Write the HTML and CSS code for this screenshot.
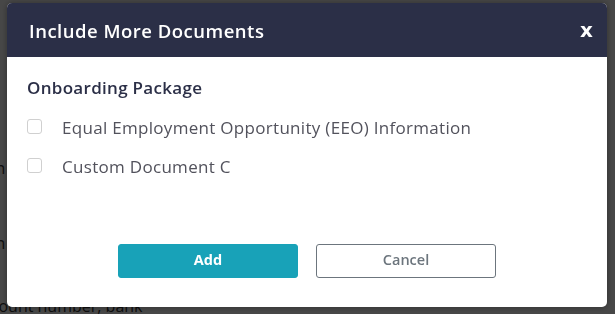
FILE: index.html
```html
<!DOCTYPE html>
<html lang="en">
<head>
<meta charset="utf-8">
<title>Include More Documents</title>
<link rel="stylesheet" href="styles.css">
</head>
<body>
<div class="page">
  <p class="page-line line-a">Plan</p>
  <p class="page-line line-b">Plan</p>
  <p class="page-line line-c">Account number, bank</p>
</div>
<div class="overlay">
  <div class="dialog" role="dialog" aria-labelledby="dlg-title">
    <div class="dialog-header">
      <h2 class="dialog-title" id="dlg-title">Include More Documents</h2>
      <button class="close-btn" type="button">x</button>
    </div>
    <div class="dialog-body">
      <h3 class="group-title">Onboarding Package</h3>
      <label class="check-row"><span class="check-box"></span><span class="check-label">Equal Employment Opportunity (EEO) Information</span></label>
      <label class="check-row"><span class="check-box"></span><span class="check-label">Custom Document C</span></label>
    </div>
    <div class="dialog-footer">
      <button class="btn btn-primary" type="button">Add</button>
      <button class="btn btn-outline" type="button">Cancel</button>
    </div>
  </div>
</div>
</body>
</html>
```
FILE: styles.css
```css
html, body {
  margin: 0;
  padding: 0;
  width: 615px;
  height: 314px;
  overflow: hidden;
  background: #ffffff;
  font-family: "Open Sans", "Liberation Sans", sans-serif;
}

.page {
  margin-left: -27px;
  padding-top: 150px;
  color: #333333;
  font-size: 16px;
}

.page-line {
  margin: 0;
  line-height: 20px;
}

.line-a { margin-top: 8px; }
.line-b { margin-top: 55px; }
.line-c { margin-top: 43px; }

.overlay {
  position: fixed;
  inset: 0;
  background: rgba(0, 0, 0, 0.72);
}

.dialog {
  position: absolute;
  left: 7px;
  top: 3px;
  width: 600px;
  height: 304px;
  background: #ffffff;
  border-radius: 5px;
  overflow: hidden;
  display: flex;
  flex-direction: column;
  box-shadow: 0 0 6px rgba(0, 0, 0, 0.35);
}

.dialog-header {
  height: 54px;
  flex: none;
  background: #2b2f47;
  display: flex;
  align-items: center;
  justify-content: space-between;
  padding: 0 14px 0 22px;
}

.dialog-title {
  margin: 0;
  color: #ffffff;
  font-size: 18.5px;
  font-weight: 600;
  letter-spacing: 0.5px;
}

.close-btn {
  background: none;
  border: 0;
  padding: 0;
  color: #ffffff;
  font-family: "DejaVu Sans", sans-serif;
  font-size: 20px;
  font-weight: 700;
  line-height: 20px;
}

.dialog-body {
  flex: 1;
  padding: 19px 20px 0 20px;
}

.group-title {
  margin: 0 0 7px 0;
  color: #2b2f47;
  font-size: 17px;
  font-weight: 600;
  line-height: 24px;
  letter-spacing: 0.3px;
}

.check-row {
  display: flex;
  align-items: center;
  gap: 20px;
  height: 39px;
}

.check-box {
  width: 13px;
  height: 13px;
  border: 1px solid #d0d0d0;
  border-radius: 3px;
  flex: none;
}

.check-label {
  color: #52525c;
  font-size: 17px;
  line-height: 24px;
  letter-spacing: 0.3px;
  padding-top: 3px;
}

.dialog-footer {
  display: flex;
  justify-content: center;
  gap: 18px;
  padding-bottom: 29px;
}

.btn {
  width: 180px;
  height: 34px;
  padding: 0 0 3px 0;
  border-radius: 3px;
  font-family: "Open Sans", "Liberation Sans", sans-serif;
  font-size: 14.5px;
  font-weight: 700;
  cursor: pointer;
}

.btn-primary {
  background: #18a2b8;
  border: 1px solid #18a2b8;
  color: #ffffff;
}

.btn-outline {
  background: #ffffff;
  border: 1px solid #6c757d;
  color: #6c757d;
  font-weight: 600;
}
```
